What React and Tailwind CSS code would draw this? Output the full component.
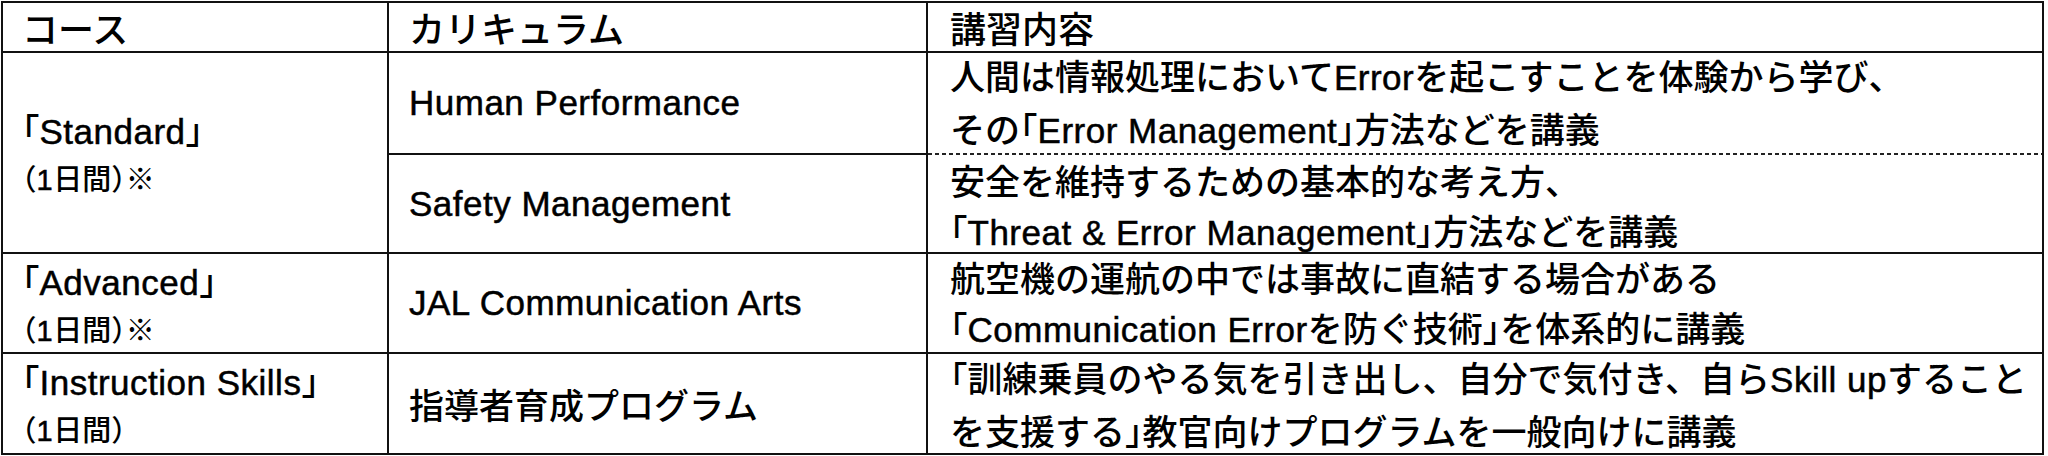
import React from "react";

// wrap latin runs and corner brackets so they get the narrower look of the original
const rich = (text) =>
  text
    .split(/([A-Za-z0-9&](?:[A-Za-z0-9& ]*[A-Za-z0-9&])?|[「」（）])/)
    .filter(Boolean)
    .map((part, i) => {
      if (/^[「」（）]$/.test(part))
        return (
          <span key={i} className="[font-feature-settings:'halt']">
            {part}
          </span>
        );
      if (/^[A-Za-z0-9&]/.test(part))
        return (
          <span
            key={i}
            className="font-['Liberation_Sans'] tracking-[0.5px] [-webkit-text-stroke:0.5px]"
          >
            {part}
          </span>
        );
      return <React.Fragment key={i}>{part}</React.Fragment>;
    });

const Course = ({ name, days, span }) => (
  <div
    className={`bg-white pl-[19px] flex flex-col justify-center whitespace-nowrap ${
      span ? "row-span-2" : ""
    }`}
  >
    <div className="leading-[49px]">{rich(name)}</div>
    <div className="text-[29px] leading-[42px]">{rich(days)}</div>
  </div>
);

const Curriculum = ({ title }) => (
  <div className="bg-white pl-5 flex items-center whitespace-nowrap leading-[50px]">
    {rich(title)}
  </div>
);

const Lines = ({ lines, className = "" }) => (
  <div className={`pl-[22px] flex flex-col justify-center whitespace-nowrap ${className}`}>
    {lines.map((line, i) => (
      <div key={i} className="leading-[50px]">
        {rich(line)}
      </div>
    ))}
  </div>
);

const App = () => {
  return (
    <div className="w-[2048px] h-[456px] bg-white pl-[1px] pt-[1px] text-black font-medium font-['Noto_Sans_CJK_JP',sans-serif] text-[35px]">
      <div className="grid w-fit grid-cols-[384px_537px_1114px] grid-rows-[48px_100px_97px_98px_99px] gap-[2px] p-[2px] bg-[#111]">
        <div className="bg-white pl-[19px] flex items-center text-[36px] leading-[48px]">コース</div>
        <div className="bg-white pl-5 flex items-center text-[36px] leading-[48px]">カリキュラム</div>
        <div className="bg-white pl-[22px] flex items-center text-[36px] leading-[48px]">講習内容</div>

        <Course name="「Standard」" days="（1日間）※" span />
        <Curriculum title="Human Performance" />
        <div className="row-span-2 bg-white flex flex-col">
          <Lines
            className="h-[100px]"
            lines={[
              "人間は情報処理においてErrorを起こすことを体験から学び、",
              "その「Error Management」方法などを講義",
            ]}
          />
          <div className="h-[2px] shrink-0 bg-[image:repeating-linear-gradient(90deg,#222_0_4px,transparent_4px_7px)]" />
          <Lines
            className="flex-1"
            lines={[
              "安全を維持するための基本的な考え方、",
              "「Threat & Error Management」方法などを講義",
            ]}
          />
        </div>
        <Curriculum title="Safety Management" />

        <Course name="「Advanced」" days="（1日間）※" />
        <Curriculum title="JAL Communication Arts" />
        <Lines
          className="bg-white"
          lines={[
            "航空機の運航の中では事故に直結する場合がある",
            "「Communication Errorを防ぐ技術」を体系的に講義",
          ]}
        />

        <Course name="「Instruction Skills」" days="（1日間）" />
        <Curriculum title="指導者育成プログラム" />
        <Lines
          className="bg-white"
          lines={[
            "「訓練乗員のやる気を引き出し、自分で気付き、自らSkill upすること",
            "を支援する」教官向けプログラムを一般向けに講義",
          ]}
        />
      </div>
    </div>
  );
};

export default App;
